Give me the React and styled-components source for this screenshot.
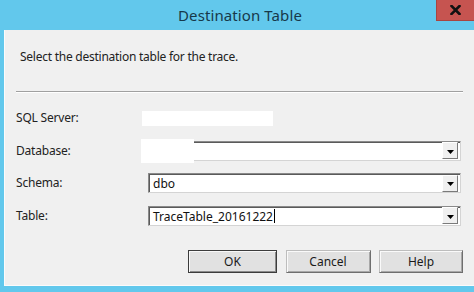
import React from "react";
import styled, { createGlobalStyle } from "styled-components";

const Global = createGlobalStyle`
  html, body { margin: 0; padding: 0; background: #f0f0f0; }
  body { font-family: "Noto Sans", "Open Sans", sans-serif; }
`;

const Window = styled.div`
  width: 474px;
  height: 292px;
  display: flex;
  flex-direction: column;
  overflow: hidden;
  background: #62c8ec;
`;

const TitleBar = styled.div`
  position: relative;
  height: 30px;
  flex: none;
  display: flex;
  align-items: center;
  justify-content: center;
  background: #62c8ec;
`;

const Title = styled.div`
  font-size: 15px;
  color: #17384a;
  padding-left: 6px;
  letter-spacing: 0.1px;
`;

const CloseButton = styled.div`
  position: absolute;
  top: 0;
  right: 0;
  width: 37px;
  height: 20px;
  background: #c65450;
  border-left: 1px solid #a84540;
  border-bottom: 1px solid #a84540;
  display: flex;
  align-items: center;
  justify-content: center;
`;

const Body = styled.div`
  flex: 1;
  margin-left: 4px;
  margin-bottom: 6px;
  background: #f0f0f0;
  box-shadow: inset 1px 0 0 #fbfbfb, inset 0 -1px 0 #fbfbfb;
  display: flex;
  flex-direction: column;
  padding: 19px 11px 0 12px;
`;

const Text = styled.div`
  font-size: 12px;
  line-height: 16px;
  color: #222;
  white-space: nowrap;
`;

const Intro = styled(Text)`
  padding-left: 4px;
  letter-spacing: -0.25px;
`;

const Separator = styled.div`
  margin-top: 26px;
  height: 1px;
  background: #a0a0a0;
  border-bottom: 1px solid #ffffff;
`;

const Form = styled.div`
  margin-top: 15px;
  display: grid;
  grid-template-columns: 132px 313px;
  grid-auto-rows: 20px;
  row-gap: 12.5px;
  align-items: center;
`;

const Label = styled(Text)`
  letter-spacing: -0.2px;
`;

const ReadOnlyBox = styled.div`
  margin-left: -6px;
  width: 131px;
  height: 15px;
  background: #fff;
`;

const ComboWrap = styled.div`
  position: relative;
  height: 20px;
`;

const Combo = styled.div`
  box-sizing: border-box;
  height: 20px;
  background: #fff;
  border: 1px solid;
  border-color: #8a8a8a #d4d4d4 #d4d4d4 #8a8a8a;
  box-shadow: inset 1px 1px 0 #5a5a5a;
  display: flex;
  align-items: center;
  padding: 1px 1px 1px 4px;
`;

const ComboText = styled.div`
  flex: 1;
  font-size: 12px;
  color: #111;
  display: flex;
  align-items: center;
  white-space: nowrap;
  padding-top: 1px;
`;

const Caret = styled.span`
  display: inline-block;
  width: 1px;
  height: 14px;
  background: #000;
  margin-left: 1px;
`;

const DropButton = styled.div`
  box-sizing: border-box;
  width: 16px;
  height: 17px;
  margin-right: 1px;
  background: #f0f0f0;
  border: 1px solid;
  border-color: #ffffff #7a7a7a #7a7a7a #ffffff;
  display: flex;
  align-items: center;
  justify-content: center;
  padding-top: 2px;
`;

const Redaction = styled.div`
  position: absolute;
  left: -7px;
  top: -2px;
  width: 53px;
  height: 24px;
  background: #fff;
`;

const Buttons = styled.div`
  margin-top: 24px;
  display: flex;
  justify-content: flex-end;
  gap: 8.5px;
  padding-right: 0;
`;

const Button = styled.div`
  box-sizing: border-box;
  width: ${(p) => p.$w}px;
  height: 23px;
  background: #e1e1e1;
  border: 1px solid;
  border-color: ${(p) =>
    p.$default ? "#3c3c3c" : "#bdbdbd #6e6e6e #6e6e6e #bdbdbd"};
  box-shadow: ${(p) =>
    p.$default
      ? "inset 1px 1px 0 #f8f8f8, inset -1px -1px 0 #8a8a8a"
      : "inset 1px 1px 0 #fafafa, inset -1px -1px 0 #a8a8a8"};
  display: flex;
  align-items: center;
  justify-content: center;
  font-size: 12px;
  color: #1a1a1a;
`;

const Arrow = () => (
  <svg width="7" height="4" viewBox="0 0 7 4">
    <path d="M0 0H7L3.5 4Z" fill="#000" />
  </svg>
);

const XIcon = () => (
  <svg width="11" height="10" viewBox="0 0 11 10">
    <path d="M1.5 1L9.5 9M9.5 1L1.5 9" stroke="#111" strokeWidth="2.6" strokeLinecap="square" />
  </svg>
);

const ComboBox = ({ value, caret, redacted }) => (
  <ComboWrap>
    <Combo>
      <ComboText>
        {value}
        {caret && <Caret />}
      </ComboText>
      <DropButton>
        <Arrow />
      </DropButton>
    </Combo>
    {redacted && <Redaction />}
  </ComboWrap>
);

export default function App() {
  return (
    <>
      <Global />
      <Window>
        <TitleBar>
          <Title>Destination Table</Title>
          <CloseButton>
            <XIcon />
          </CloseButton>
        </TitleBar>
        <Body>
          <Intro>Select the destination table for the trace.</Intro>
          <Separator />
          <Form>
            <Label>SQL Server:</Label>
            <ReadOnlyBox />
            <Label>Database:</Label>
            <ComboBox value="" redacted />
            <Label>Schema:</Label>
            <ComboBox value="dbo" />
            <Label>Table:</Label>
            <ComboBox value="TraceTable_20161222" caret />
          </Form>
          <Buttons>
            <Button $w={89} $default>OK</Button>
            <Button $w={85}>Cancel</Button>
            <Button $w={84}>Help</Button>
          </Buttons>
        </Body>
      </Window>
    </>
  );
}
